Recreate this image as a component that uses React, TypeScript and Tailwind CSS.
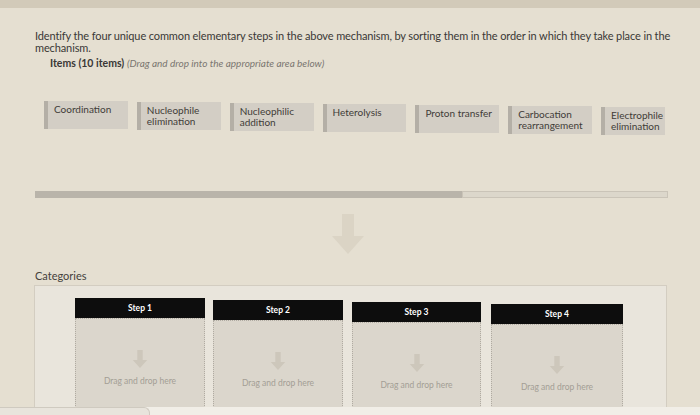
import React from "react";

const items = [
  { t: ["Coordination"], w: 84 },
  { t: ["Nucleophile", "elimination"], w: 84 },
  { t: ["Nucleophilic", "addition"], w: 84 },
  { t: ["Heterolysis"], w: 84 },
  { t: ["Proton transfer"], w: 84 },
  { t: ["Carbocation", "rearrangement"], w: 84 },
  { t: ["Electrophile", "elimination"], w: 64 },
];

function DownArrow({ w, h, color }: { w: number; h: number; color: string }) {
  return (
    <svg width={w} height={h} viewBox="0 0 40 40">
      <path d="M14 0 H26 V22 H36 L20 40 L4 22 H14 Z" fill={color} />
    </svg>
  );
}

const stepW = [130, 130, 129, 132];
const stepGap = [0, 8, 9, 10];

export default function App() {
  return (
    <div
      className="w-[700px] h-[415px] overflow-hidden bg-[#e5dfd1] text-[#3a3836]"
      style={{ fontFamily: "Lato, 'Open Sans', sans-serif" }}
    >
      <div className="h-[8px] bg-[#d2cab9]" />
      <div className="h-[399px] overflow-hidden flex flex-col">
        <div className="px-[35px] pt-[22px]">
          <p className="text-[11px] leading-[12px] w-[665px] tracking-[-0.12px]">
            <span className="whitespace-nowrap">
              Identify the four unique common elementary steps in the above mechanism, by sorting them in the order in which they take place in the
            </span>
            <br />
            mechanism.
          </p>
          <div className="mt-[3px] ml-[15px] text-[10.5px] leading-[12px]">
            <span className="font-bold text-[#3a3836]">Items (10 items)</span>{" "}
            <span className="italic text-[10px] text-[#7a7670]">(Drag and drop into the appropriate area below)</span>
          </div>
          <div className="mt-[32px] ml-[9px] flex gap-[9px]">
            {items.map((it, i) => (
              <div
                key={i}
                className="h-[28px] bg-[#d3cec5] border-l-[4px] border-[#b4afa6] pl-[6px] pt-[3px] text-[10px] leading-[11px] text-[#3f3c38]"
                style={{ width: it.w, marginTop: i }}
              >
                {it.t.map((l, j) => (
                  <div key={j}>{l}</div>
                ))}
              </div>
            ))}
          </div>
          <div className="mt-[56px] flex h-[7px] w-[633px]">
            <div className="w-[427px] bg-[#b9b4aa]" />
            <div className="flex-1 bg-[#dcd7cb] border border-[#cac4b8]" />
          </div>
          <div className="mt-[16px] flex justify-center pr-[4px]">
            <DownArrow w={40} h={40} color="#dbd4c5" />
          </div>
          <div className="mt-[16px] text-[11px] leading-[12px] text-[#44413c]">Categories</div>
        </div>
        <div className="ml-[34px] mt-[3px] w-[633px] flex-1 bg-[#e9e5dc] border border-[#d3cdc1] pl-[40px] pt-[12px] flex items-start">
          {[1, 2, 3, 4].map((n, i) => (
            <div
              key={n}
              className="flex flex-col"
              style={{ width: stepW[i], marginLeft: stepGap[i], marginTop: i * 2 }}
            >
              <div className="h-[20px] bg-[#0d0d0d] text-white text-[8.5px] font-bold flex items-center justify-center">
                Step {n}
              </div>
              <div className="h-[110px] bg-[#dbd6cc] border-x border-t border-dotted border-[#b0aba2] flex flex-col items-center pt-[31px]">
                <DownArrow w={18} h={18} color="#cdc7bb" />
                <div className="mt-[7px] text-[8.5px] text-[#a39e95]">Drag and drop here</div>
              </div>
            </div>
          ))}
        </div>
      </div>
      <div className="h-[8px] bg-[#f1eee7] flex">
        <div className="w-[150px] h-[8px] rounded-tr-[6px] border-t border-r border-[#cfcac0] bg-[#e8e4dc]" />
      </div>
    </div>
  );
}
